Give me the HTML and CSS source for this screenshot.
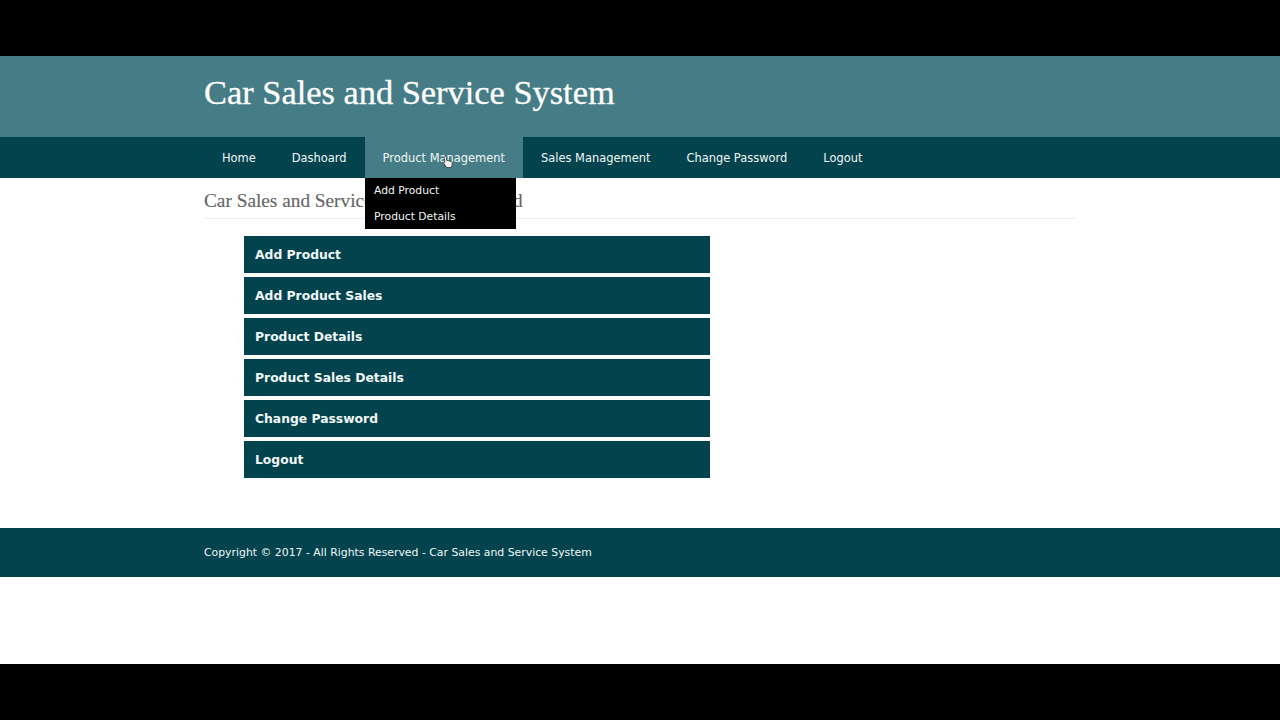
FILE: index.html
```html
<!DOCTYPE html>
<html lang="en">
<head>
<meta charset="UTF-8">
<title>Car Sales and Service System</title>
<link rel="stylesheet" href="styles.css">
</head>
<body>
<div class="page">
    <header class="header">
        <div class="wrap">
            <h1>Car Sales and Service System</h1>
        </div>
    </header>
    <nav class="nav">
        <ul class="menu wrap">
            <li><a href="#">Home</a></li>
            <li><a href="#">Dashoard</a></li>
            <li class="active">
                <a href="#">Product Management</a>
                <svg class="cursor" width="12" height="14" viewBox="0 0 14 16">
                    <path d="M4 1.500c1 0 1.500.6 1.500 1.500v3l4 1c1.500.4 2.500 1 2.500 2.500 0 2-.5 3-1.500 5H5.500L2 9.500c-.6-1 .6-2 1.500-1.200l-.9-5.300C3 2 3.300 1.500 4 1.500z" fill="#f4f4f4" stroke="#333" stroke-width="1"/>
                </svg>
                <ul class="dropdown">
                    <li><a href="#">Add Product</a></li>
                    <li><a href="#">Product Details</a></li>
                </ul>
            </li>
            <li><a href="#">Sales Management</a></li>
            <li><a href="#">Change Password</a></li>
            <li><a href="#">Logout</a></li>
        </ul>
    </nav>
    <main class="content">
        <div class="wrap">
            <h2>Car Sales and Service System Dashboard</h2>
            <div class="links">
                <a href="#">Add Product</a>
                <a href="#">Add Product Sales</a>
                <a href="#">Product Details</a>
                <a href="#">Product Sales Details</a>
                <a href="#">Change Password</a>
                <a href="#">Logout</a>
            </div>
        </div>
    </main>
    <footer class="footer">
        <div class="wrap">Copyright © 2017 - All Rights Reserved - Car Sales and Service System</div>
    </footer>
</div>
</body>
</html>
```

FILE: styles.css
```css
html, body {
    margin: 0;
    height: 100%;
    background-color: #000;
}
body {
    padding: 56px 0;
    box-sizing: border-box;
    font-family: "DejaVu Sans", Verdana, sans-serif;
    font-size: 11.450px;
}
a {
    color: #f2f7f7;
    text-decoration: none;
}
.page {
    height: 608px;
    background-color: #fdfefd;
}
.wrap {
    width: 872px;
    margin: 0 auto;
    padding: 0;
}
.header {
    height: 81px;
    background-color: #457c85;
}
.header h1 {
    margin: 0;
    padding-top: 16px;
    font-family: "Liberation Serif", Georgia, serif;
    font-size: 34.400px;
    line-height: 40px;
    font-weight: normal;
    color: #fff;
    -webkit-text-stroke: 0.3px #fff;
}
.nav {
    height: 41px;
    background-color: #03434d;
}
.menu {
    display: flex;
    list-style: none;
}
.menu > li {
    position: relative;
}
.menu > li > a {
    display: block;
    padding: 1px 18px 0;
    line-height: 40px;
}
.menu > li.active {
    background-color: #457c85;
}
.dropdown {
    position: absolute;
    top: 41px;
    left: 0;
    width: 151px;
    height: 51px;
    margin: 0;
    padding: 0;
    list-style: none;
    background-color: #000;
    font-size: 10.750px;
}
.dropdown a {
    display: block;
    padding-left: 9.500px;
    line-height: 26px;
}
.cursor {
    position: absolute;
    top: 18px;
    left: 77px;
}
.content h2 {
    margin: 0;
    padding-top: 12px;
    height: 28px;
    border-bottom: 1px solid #eeeeee;
    font-family: "Liberation Serif", Georgia, serif;
    font-size: 19.300px;
    line-height: 22px;
    font-weight: normal;
    color: #666;
    -webkit-text-stroke: 0.15px #666;
}
.links {
    display: flex;
    flex-direction: column;
    gap: 4.500px;
    width: 466px;
    margin: 17px 0 0 40px;
}
.links a {
    height: 36.500px;
    padding-left: 11px;
    line-height: 38.500px;
    background-color: #03434d;
    font-size: 12.350px;
    font-weight: bold;
}
.footer {
    height: 48.500px;
    margin-top: 50.500px;
    background-color: #03434d;
    color: #f2f7f7;
    font-size: 10.860px;
    line-height: 50.500px;
}
```
